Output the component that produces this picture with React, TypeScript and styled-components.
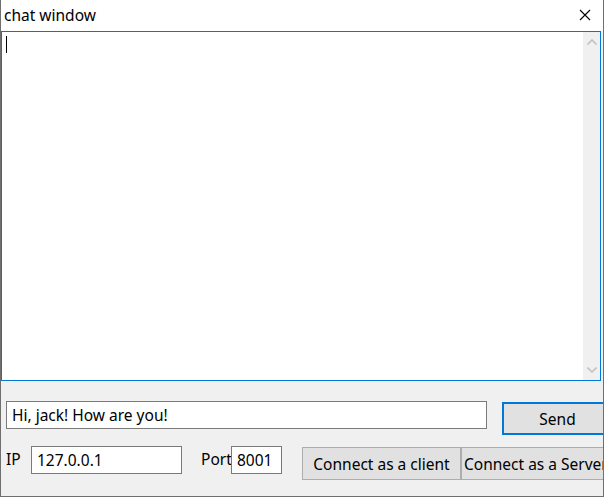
import { useState } from "react";
import styled, { createGlobalStyle } from "styled-components";

const GlobalStyle = createGlobalStyle`
  html, body {
    margin: 0;
    padding: 0;
    background: #ffffff;
  }
  body {
    font-family: "Noto Sans", "Noto Sans CJK SC", sans-serif;
  }
`;

const Window = styled.div`
  width: 602px;
  height: 496px;
  border-left: 1px solid #6f6f6f;
  border-right: 1px solid #6f6f6f;
  border-bottom: 1px solid #6f6f6f;
  background: #f0f0f0;
  display: flex;
  flex-direction: column;
  overflow: hidden;
`;

const TitleBar = styled.div`
  height: 31px;
  background: #ffffff;
  display: flex;
  align-items: center;
  justify-content: space-between;
  padding-left: 3px;
  padding-right: 12px;
  box-sizing: border-box;
`;

const Title = styled.span`
  font-size: 15.5px;
  color: #000000;
  margin-top: -2px;
`;

const CloseButton = styled.button`
  border: none;
  background: transparent;
  padding: 0;
  width: 12px;
  height: 12px;
  display: flex;
  cursor: pointer;
  margin-top: -2px;
`;

const ChatArea = styled.div`
  height: 350px;
  width: 600px;
  box-sizing: border-box;
  border: 1px solid #0078d7;
  background: #ffffff;
  display: flex;
`;

const Log = styled.div`
  flex: 1;
  padding: 4px 0 0 4px;
`;

const Caret = styled.div`
  width: 1px;
  height: 17px;
  background: #000000;
`;

const ScrollBar = styled.div`
  width: 17px;
  background: #f0f0f0;
  display: flex;
  flex-direction: column;
  justify-content: space-between;
  align-items: center;
  padding: 7px 0 7px;
`;

const Controls = styled.div`
  padding: 20px 0 0 5px;
  display: flex;
  flex-direction: column;
  gap: 11px;
`;

const Row = styled.div`
  display: flex;
  align-items: flex-start;
  white-space: nowrap;
`;

const TextInput = styled.input<{ $width: number; $gap?: number }>`
  width: ${(p) => p.$width}px;
  height: 28px;
  box-sizing: border-box;
  border: 1px solid #7a7a7a;
  background: #ffffff;
  font-family: inherit;
  font-size: 15.5px;
  color: #000000;
  padding: 0 5px;
  margin-right: ${(p) => p.$gap ?? 0}px;
  outline: none;
  flex-shrink: 0;
`;

const Label = styled.span<{ $width: number }>`
  width: ${(p) => p.$width}px;
  font-size: 15.5px;
  color: #000000;
  line-height: 20px;
  margin-top: 3px;
  flex-shrink: 0;
`;

const Button = styled.button<{ $focused?: boolean; $width: number }>`
  width: ${(p) => p.$width}px;
  height: 33px;
  margin-top: 1px;
  box-sizing: border-box;
  border: ${(p) => (p.$focused ? "2px solid #0078d7" : "1px solid #adadad")};
  background: #e1e1e1;
  font-family: inherit;
  font-size: 15.5px;
  color: #000000;
  padding: 0;
  flex-shrink: 0;
  white-space: nowrap;
  overflow: hidden;
  cursor: pointer;
`;

const ServerButton = styled(Button)`
  text-align: left;
  padding-left: 2px;
`;

const Chevron = ({ up }: { up: boolean }) => (
  <svg width="10" height="6" viewBox="0 0 10 6">
    <path
      d={up ? "M0.5 5.5 L5 1 L9.5 5.5" : "M0.5 0.5 L5 5 L9.5 0.5"}
      fill="none"
      stroke="#c2c2c2"
      strokeWidth="1.6"
    />
  </svg>
);

export default function App() {
  const [message, setMessage] = useState("Hi, jack! How are you!");
  const [ip, setIp] = useState("127.0.0.1");
  const [port, setPort] = useState("8001");

  return (
    <>
      <GlobalStyle />
      <Window>
        <TitleBar>
          <Title>chat window</Title>
          <CloseButton aria-label="close">
            <svg width="12" height="12" viewBox="0 0 12 12">
              <path d="M1 1 L11 11 M11 1 L1 11" stroke="#000" strokeWidth="1.1" />
            </svg>
          </CloseButton>
        </TitleBar>
        <ChatArea>
          <Log>
            <Caret />
          </Log>
          <ScrollBar>
            <Chevron up />
            <Chevron up={false} />
          </ScrollBar>
        </ChatArea>
        <Controls>
          <Row>
            <TextInput
              $width={481}
              $gap={15}
              value={message}
              onChange={(e) => setMessage(e.target.value)}
            />
            <Button $focused $width={111}>
              Send
            </Button>
          </Row>
          <Row>
            <Label $width={25}>IP</Label>
            <TextInput $width={151} $gap={19} value={ip} onChange={(e) => setIp(e.target.value)} />
            <Label $width={30}>Port</Label>
            <TextInput
              $width={51}
              $gap={20}
              value={port}
              onChange={(e) => setPort(e.target.value)}
            />
            <Button $width={159}>Connect as a client</Button>
            <ServerButton $width={150}>Connect as a Server</ServerButton>
          </Row>
        </Controls>
      </Window>
    </>
  );
}
